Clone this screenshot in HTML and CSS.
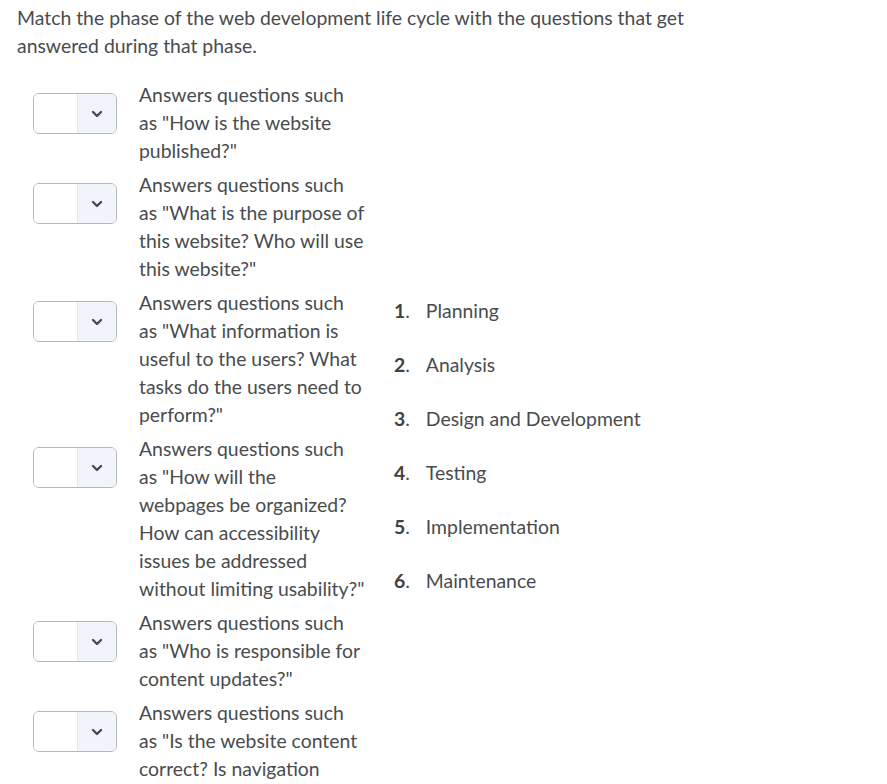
FILE: index.html
```html
<!DOCTYPE html>
<html>
<head>
<meta charset="utf-8">
<link rel="stylesheet" href="styles.css">
</head>
<body>
<p class="prompt">Match the phase of the web development life cycle with the questions that get answered during that phase.</p>
<div class="matching">
  <div class="rows">
    <div class="row">
      <div class="select"><span class="value"></span><span class="arrow"><svg width="12" height="8" viewBox="0 0 12 8"><path d="M2 2 L6 6 L10 2" fill="none" stroke="#494c4e" stroke-width="2.4" stroke-linecap="round" stroke-linejoin="round"/></svg></span></div>
      <div class="text">Answers questions such as "How is the website published?"</div>
    </div>
    <div class="row">
      <div class="select"><span class="value"></span><span class="arrow"><svg width="12" height="8" viewBox="0 0 12 8"><path d="M2 2 L6 6 L10 2" fill="none" stroke="#494c4e" stroke-width="2.4" stroke-linecap="round" stroke-linejoin="round"/></svg></span></div>
      <div class="text">Answers questions such as "What is the purpose of this website? Who will use this website?"</div>
    </div>
    <div class="row">
      <div class="select"><span class="value"></span><span class="arrow"><svg width="12" height="8" viewBox="0 0 12 8"><path d="M2 2 L6 6 L10 2" fill="none" stroke="#494c4e" stroke-width="2.4" stroke-linecap="round" stroke-linejoin="round"/></svg></span></div>
      <div class="text">Answers questions such as "What information is useful to the users? What tasks do the users need to perform?"</div>
    </div>
    <div class="row">
      <div class="select"><span class="value"></span><span class="arrow"><svg width="12" height="8" viewBox="0 0 12 8"><path d="M2 2 L6 6 L10 2" fill="none" stroke="#494c4e" stroke-width="2.4" stroke-linecap="round" stroke-linejoin="round"/></svg></span></div>
      <div class="text">Answers questions such as "How will the webpages be organized? How can accessibility issues be addressed without limiting usability?"</div>
    </div>
    <div class="row">
      <div class="select"><span class="value"></span><span class="arrow"><svg width="12" height="8" viewBox="0 0 12 8"><path d="M2 2 L6 6 L10 2" fill="none" stroke="#494c4e" stroke-width="2.4" stroke-linecap="round" stroke-linejoin="round"/></svg></span></div>
      <div class="text">Answers questions such as "Who is responsible for content updates?"</div>
    </div>
    <div class="row">
      <div class="select"><span class="value"></span><span class="arrow"><svg width="12" height="8" viewBox="0 0 12 8"><path d="M2 2 L6 6 L10 2" fill="none" stroke="#494c4e" stroke-width="2.4" stroke-linecap="round" stroke-linejoin="round"/></svg></span></div>
      <div class="text">Answers questions such as "Is the website content correct? Is navigation intuitive?"</div>
    </div>
  </div>
  <ol class="choices">
    <li><span class="num">1</span>.<span class="label">Planning</span></li>
    <li><span class="num">2</span>.<span class="label">Analysis</span></li>
    <li><span class="num">3</span>.<span class="label">Design and Development</span></li>
    <li><span class="num">4</span>.<span class="label">Testing</span></li>
    <li><span class="num">5</span>.<span class="label">Implementation</span></li>
    <li><span class="num">6</span>.<span class="label">Maintenance</span></li>
  </ol>
</div>
</body>
</html>
```

FILE: styles.css
```css
html, body {
  margin: 0;
  background: #ffffff;
}
body {
  padding: 4px 17px 0 17px;
  font-family: Lato, "Open Sans", sans-serif;
  font-size: 19.4px;
  line-height: 28px;
  color: #494c4e;
}
.prompt {
  margin: 0;
  width: 720px;
}
.matching {
  margin-top: 21px;
  display: flex;
  align-items: center;
}
.rows {
  display: flex;
  flex-direction: column;
  gap: 6px;
}
.row {
  display: flex;
  align-items: flex-start;
}
.select {
  margin: 12px 0 0 16px;
  width: 82px;
  height: 39px;
  border: 1px solid #b5b8bb;
  border-radius: 6px;
  display: flex;
  overflow: hidden;
  flex: none;
}
.value {
  width: 43px;
  background: #ffffff;
  border-right: 1px solid #e3e7ed;
}
.arrow {
  flex: 1;
  background: #f1f5fb;
  display: flex;
  align-items: center;
  justify-content: center;
}
.text {
  margin-left: 22px;
  width: 226px;
  flex: none;
}
.choices {
  list-style: none;
  margin: 0 0 0 29px;
  padding: 0;
  display: flex;
  flex-direction: column;
  gap: 26px;
}
.choices li {
  display: flex;
}
.num {
  font-weight: 700;
  color: #3f4244;
}
.label {
  margin-left: 16px;
}
```
